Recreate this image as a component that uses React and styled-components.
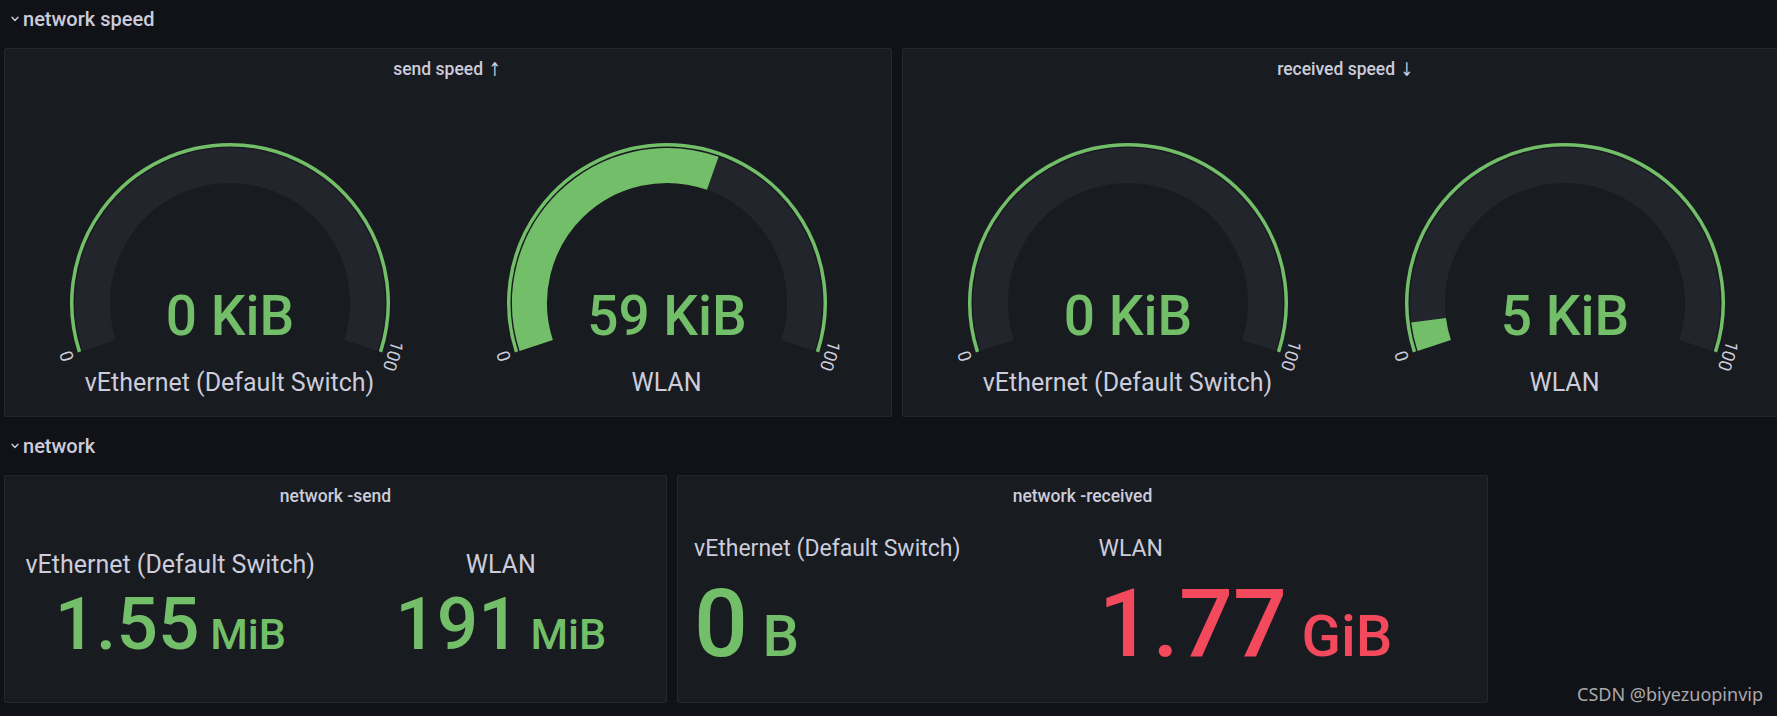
import React from 'react';
import styled, { createGlobalStyle } from 'styled-components';

const GREEN = '#73bf69';
const RED = '#f2495c';
const TEXT = '#ccccdc';

const GlobalStyle = createGlobalStyle`
  html, body { margin: 0; padding: 0; background: #111217; }
  body { font-family: Roboto, "Noto Sans", sans-serif; color: ${TEXT}; overflow: hidden; }
  * { box-sizing: border-box; }
`;

const Page = styled.div`
  width: 1777px;
  height: 716px;
  overflow: hidden;
  position: relative;
  display: flex;
  flex-direction: column;
  gap: 10px;
  background: #111217;
`;

const RowHeader = styled.div`
  height: 38px;
  flex-shrink: 0;
  display: flex;
  align-items: center;
  gap: 4px;
  padding-left: 11px;
  font-size: 20px;
  font-weight: 500;
  color: ${TEXT};
`;

const Chevron = styled.svg`
  width: 8px;
  height: 6px;
  flex-shrink: 0;
`;

const PanelRow = styled.div`
  display: flex;
  gap: 10px;
  padding-left: 4px;
  height: ${(p) => p.$h}px;
  flex-shrink: 0;
`;

const Panel = styled.section`
  flex: 0 0 ${(p) => p.$w}px;
  background: #181b1f;
  border: 1px solid #25272c;
  border-radius: 2px;
  display: flex;
  flex-direction: column;
`;

const PanelTitle = styled.h2`
  margin: 0;
  height: 40px;
  flex-shrink: 0;
  display: flex;
  align-items: center;
  justify-content: center;
  gap: 0.22em;
  font-size: 17.5px;
  font-weight: 500;
  color: ${TEXT};
`;

const Arrow = styled.span`
  font-family: "DejaVu Sans", sans-serif;
  font-weight: 400;
  font-size: 19px;
  transform: scaleX(0.8);
`;

const GaugeGrid = styled.div`
  flex: 1;
  display: grid;
  grid-template-columns: 1fr 1fr;
  padding: 0 6px;
`;

const GaugeCell = styled.div`
  display: flex;
  flex-direction: column;
  align-items: center;
`;

const GaugeSvg = styled.svg`
  width: 436px;
  height: 280px;
  display: block;
  overflow: visible;
  font-family: Roboto, sans-serif;
`;

const GaugeName = styled.div`
  font-size: 25px;
  line-height: 28px;
  color: ${TEXT};
  white-space: nowrap;
`;

const StatGrid = styled.div`
  flex: 1;
  display: grid;
  grid-template-columns: 1fr 1fr;
  padding-top: ${(p) => p.$padTop}px;
`;

const StatCell = styled.div`
  display: flex;
  flex-direction: column;
  align-items: ${(p) => (p.$left ? 'flex-start' : 'center')};
  padding: 0 16px;
  gap: ${(p) => p.$gap}px;
`;

const StatLabel = styled.div`
  font-size: ${(p) => p.$size}px;
  line-height: ${(p) => p.$lh}px;
  color: ${TEXT};
  white-space: nowrap;
`;

const StatValue = styled.div`
  font-size: ${(p) => p.$size}px;
  line-height: ${(p) => p.$lh}px;
  font-weight: 500;
  color: ${(p) => p.$color};
  white-space: nowrap;
`;

const Unit = styled.span`
  font-size: ${(p) => p.$size}px;
  margin-left: 0.25em;
`;

const Watermark = styled.div`
  position: absolute;
  right: 14px;
  bottom: 12px;
  font-family: "Noto Sans", sans-serif;
  font-size: 18px;
  line-height: 20px;
  color: #a9a9ab;
`;

const START = 0.9 * Math.PI;
const END = 2.1 * Math.PI;

function arcPath(cx, cy, r, a0, a1) {
  const x0 = cx + r * Math.cos(a0);
  const y0 = cy + r * Math.sin(a0);
  const x1 = cx + r * Math.cos(a1);
  const y1 = cy + r * Math.sin(a1);
  const large = a1 - a0 > Math.PI ? 1 : 0;
  return `M ${x0.toFixed(2)} ${y0.toFixed(2)} A ${r} ${r} 0 ${large} 1 ${x1.toFixed(2)} ${y1.toFixed(2)}`;
}

function Gauge({ value, unit, name }) {
  const cx = 218;
  const cy = 214;
  const frac = Math.max(0, Math.min(1, value / 100));
  const labelR = 172;
  const lbl = (a) => ({
    x: cx + labelR * Math.cos(a),
    y: cy + labelR * Math.sin(a),
    rot: ((a + Math.PI / 2) * 180) / Math.PI,
  });
  const l0 = lbl(START);
  const l1 = lbl(END);
  return (
    <GaugeCell>
      <GaugeSvg viewBox="0 0 436 280">
        <path d={arcPath(cx, cy, 158.25, START, END)} fill="none" stroke={GREEN} strokeWidth="3.5" />
        <path d={arcPath(cx, cy, 137.5, START, END)} fill="none" stroke="#22252b" strokeWidth="35" />
        {frac > 0 && (
          <path
            d={arcPath(cx, cy, 137.5, START, START + frac * (END - START))}
            fill="none"
            stroke={GREEN}
            strokeWidth="35"
          />
        )}
        <text
          x={l0.x}
          y={l0.y}
          fill={TEXT}
          fontSize="18"
          textAnchor="middle"
          dominantBaseline="central"
          transform={`rotate(${l0.rot} ${l0.x} ${l0.y})`}
        >
          0
        </text>
        <text
          x={l1.x}
          y={l1.y}
          fill={TEXT}
          fontSize="18"
          textAnchor="middle"
          dominantBaseline="central"
          transform={`rotate(${l1.rot} ${l1.x} ${l1.y})`}
        >
          100
        </text>
        <text x={cx} y={cy + 32} fill={GREEN} fontSize="55" fontWeight="500" textAnchor="middle">
          {value} {unit}
        </text>
      </GaugeSvg>
      <GaugeName>{name}</GaugeName>
    </GaugeCell>
  );
}

function ChevronDown() {
  return (
    <Chevron viewBox="0 0 8 6">
      <path d="M1 1.2 L4 4.4 L7 1.2" fill="none" stroke={TEXT} strokeWidth="1.4" strokeLinecap="round" strokeLinejoin="round" />
    </Chevron>
  );
}

function Stat({ label, value, unit, color, s }) {
  return (
    <StatCell $left={s.left} $gap={s.gap}>
      <StatLabel $size={s.labelSize} $lh={s.labelLh}>{label}</StatLabel>
      <StatValue $size={s.valueSize} $lh={s.valueLh} $color={color}>
        {value}
        <Unit $size={s.unitSize}>{unit}</Unit>
      </StatValue>
    </StatCell>
  );
}

const sendStyle = { left: false, gap: 5, labelSize: 25, labelLh: 28, valueSize: 73, valueLh: 80, unitSize: 43 };
const recvStyle = { left: true, gap: 12, labelSize: 23, labelLh: 26, valueSize: 95, valueLh: 100, unitSize: 58 };

export default function App() {
  return (
    <>
      <GlobalStyle />
      <Page>
        <RowHeader>
          <ChevronDown />
          network speed
        </RowHeader>
        <PanelRow $h={369}>
          <Panel $w={888}>
            <PanelTitle>
              send speed<Arrow>↑</Arrow>
            </PanelTitle>
            <GaugeGrid>
              <Gauge value={0} unit="KiB" name="vEthernet (Default Switch)" />
              <Gauge value={59} unit="KiB" name="WLAN" />
            </GaugeGrid>
          </Panel>
          <Panel $w={888}>
            <PanelTitle>
              received speed<Arrow>↓</Arrow>
            </PanelTitle>
            <GaugeGrid>
              <Gauge value={0} unit="KiB" name="vEthernet (Default Switch)" />
              <Gauge value={5} unit="KiB" name="WLAN" />
            </GaugeGrid>
          </Panel>
        </PanelRow>
        <RowHeader>
          <ChevronDown />
          network
        </RowHeader>
        <PanelRow $h={228}>
          <Panel $w={663}>
            <PanelTitle>network -send</PanelTitle>
            <StatGrid $padTop={35}>
              <Stat label="vEthernet (Default Switch)" value="1.55" unit="MiB" color={GREEN} s={sendStyle} />
              <Stat label="WLAN" value="191" unit="MiB" color={GREEN} s={sendStyle} />
            </StatGrid>
          </Panel>
          <Panel $w={811}>
            <PanelTitle>network -received</PanelTitle>
            <StatGrid $padTop={20}>
              <Stat label="vEthernet (Default Switch)" value="0" unit="B" color={GREEN} s={recvStyle} />
              <Stat label="WLAN" value="1.77" unit="GiB" color={RED} s={recvStyle} />
            </StatGrid>
          </Panel>
        </PanelRow>
        <Watermark>CSDN @biyezuopinvip</Watermark>
      </Page>
    </>
  );
}
